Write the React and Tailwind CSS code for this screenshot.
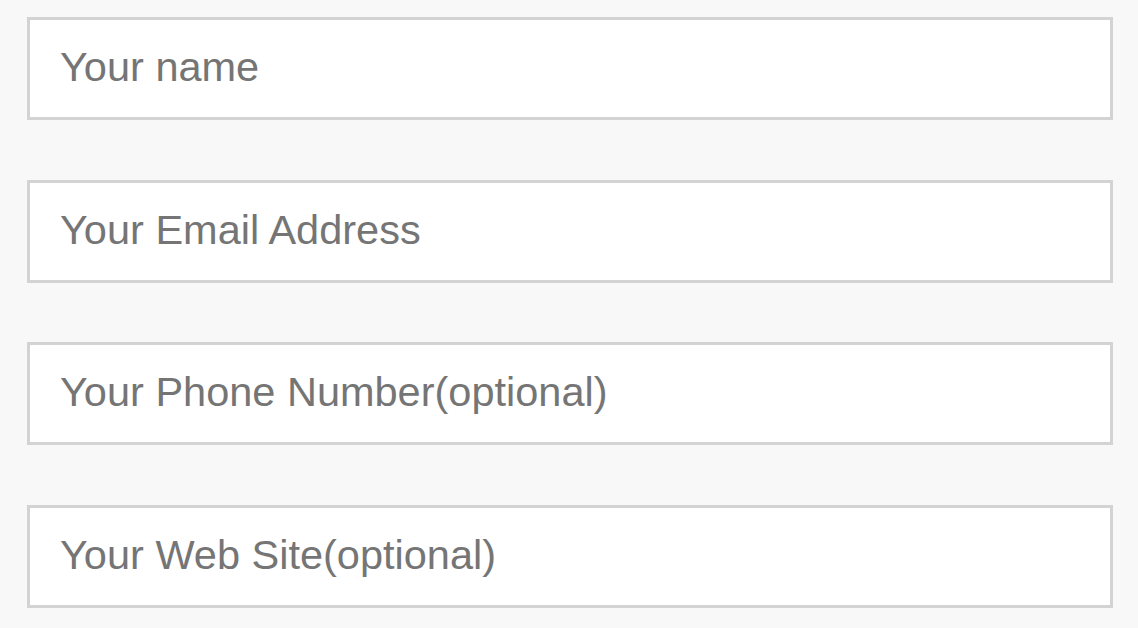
import React from "react";

const fields = [
  { name: "name", type: "text", placeholder: "Your name" },
  { name: "email", type: "email", placeholder: "Your Email Address" },
  { name: "phone", type: "tel", placeholder: "Your Phone Number(optional)" },
  { name: "website", type: "url", placeholder: "Your Web Site(optional)" },
];

export default function App() {
  return (
    <div className="min-h-[628px] w-full bg-[#f8f8f8] pl-[27px] pr-[25px] pt-[17px] font-['Liberation_Sans',Arial,sans-serif]">
      <form className="flex flex-col gap-[59.5px]">
        {fields.map((f) => (
          <input
            key={f.name}
            name={f.name}
            type={f.type}
            placeholder={f.placeholder}
            className="block h-[103px] w-[1086px] border-[3px] border-[#d3d3d3] bg-white pb-[3px] pl-[30px] text-[41.5px] text-[#757575] placeholder:text-[#757575] outline-none"
          />
        ))}
      </form>
    </div>
  );
}
